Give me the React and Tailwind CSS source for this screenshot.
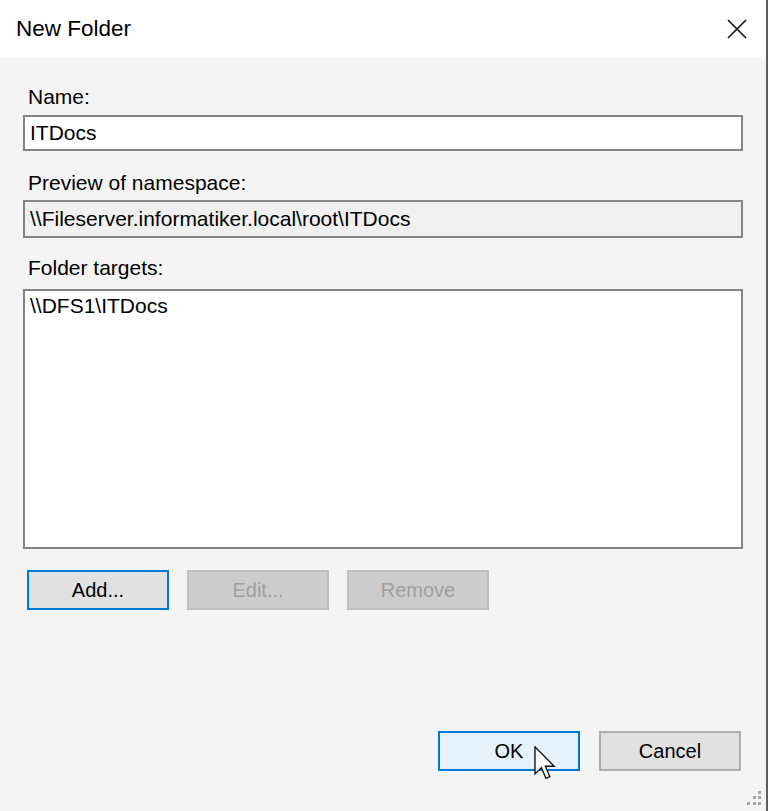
import React from "react";

const font = { fontFamily: '"Liberation Sans", Arial, sans-serif' };

const Cursor = () => (
  <svg
    className="absolute left-[534px] top-[746px]"
    width="22"
    height="34"
    viewBox="0 0 12.5 19.5"
  >
    <path
      d="M0.5 0.5 L0.5 16 L4.2 12.4 L6.8 18.6 L9 17.6 L6.5 11.6 L11.5 11.6 Z"
      fill="#ffffff"
      stroke="#111111"
      strokeWidth="0.8"
      strokeLinejoin="miter"
    />
  </svg>
);

const Grip = () => (
  <div className="absolute right-[4px] bottom-[5px] w-[15px] h-[15px]">
    <span className="absolute left-[11px] top-0 w-[3px] h-[3px] bg-[#a8a8a8]" />
    <span className="absolute left-[6px] top-[5px] w-[3px] h-[3px] bg-[#a8a8a8]" />
    <span className="absolute left-[11px] top-[5px] w-[3px] h-[3px] bg-[#a8a8a8]" />
    <span className="absolute left-0 top-[11px] w-[3px] h-[3px] bg-[#a8a8a8]" />
    <span className="absolute left-[6px] top-[11px] w-[3px] h-[3px] bg-[#a8a8a8]" />
    <span className="absolute left-[11px] top-[11px] w-[3px] h-[3px] bg-[#a8a8a8]" />
  </div>
);

const Button = ({ children, variant = "normal" }) => {
  const styles = {
    normal: "bg-[#e1e1e1] border-[#adadad] text-black",
    focused: "bg-[#e1e1e1] border-[#0078d7] text-black",
    hover: "bg-[#e5f1fb] border-[#0078d7] text-black",
    disabled: "bg-[#cccccc] border-[#bfbfbf] text-[#a0a0a0]",
  };
  return (
    <button
      className={`w-[142px] h-[40px] border-2 flex items-center justify-center text-[20px] ${styles[variant]}`}
      style={font}
    >
      {children}
    </button>
  );
};

export default function App() {
  return (
    <div
      className="relative w-[768px] h-[811px] flex flex-col bg-[#f4f4f4] border-r-2 border-[#5c5c5c] overflow-hidden"
      style={font}
    >
      <div className="h-[58px] bg-white flex items-center justify-between pl-[16px] pr-[18px]">
        <span className="text-[22.5px] text-black">New Folder</span>
        <svg width="22" height="22" viewBox="0 0 22 22">
          <path d="M2 2 L20 20 M20 2 L2 20" stroke="#111" strokeWidth="1.6" />
        </svg>
      </div>

      <div className="flex-1 flex flex-col pl-[23px] pr-[23px] pt-[27px] pb-[40px]">
        <label className="pl-[5px] text-[21px] leading-[24px] text-black">Name:</label>
        <div className="mt-[6px] h-[36px] bg-white border-2 border-[#848484] flex items-center pl-[5px] text-[21px] text-black">
          ITDocs
        </div>

        <label className="mt-[20px] pl-[5px] text-[21px] leading-[24px] text-black">
          Preview of namespace:
        </label>
        <div className="mt-[5px] h-[38px] bg-[#f0f0f0] border-2 border-[#848484] flex items-center pl-[5px] text-[21px] text-black">
          {"\\\\Fileserver.informatiker.local\\root\\ITDocs"}
        </div>

        <label className="mt-[18px] pl-[5px] text-[21px] leading-[24px] text-black">
          Folder targets:
        </label>
        <div className="mt-[9px] h-[260px] bg-white border-2 border-[#848484] pl-[5px] pt-[3px] text-[21px] leading-[24px] text-black">
          {"\\\\DFS1\\ITDocs"}
        </div>

        <div className="mt-[21px] pl-[4px] flex gap-[18px]">
          <Button variant="focused">Add...</Button>
          <Button variant="disabled">Edit...</Button>
          <Button variant="disabled">Remove</Button>
        </div>

        <div className="mt-auto flex justify-end gap-[19px] pr-[2px]">
          <Button variant="hover">OK</Button>
          <Button>Cancel</Button>
        </div>
      </div>

      <Cursor />
      <Grip />
    </div>
  );
}
